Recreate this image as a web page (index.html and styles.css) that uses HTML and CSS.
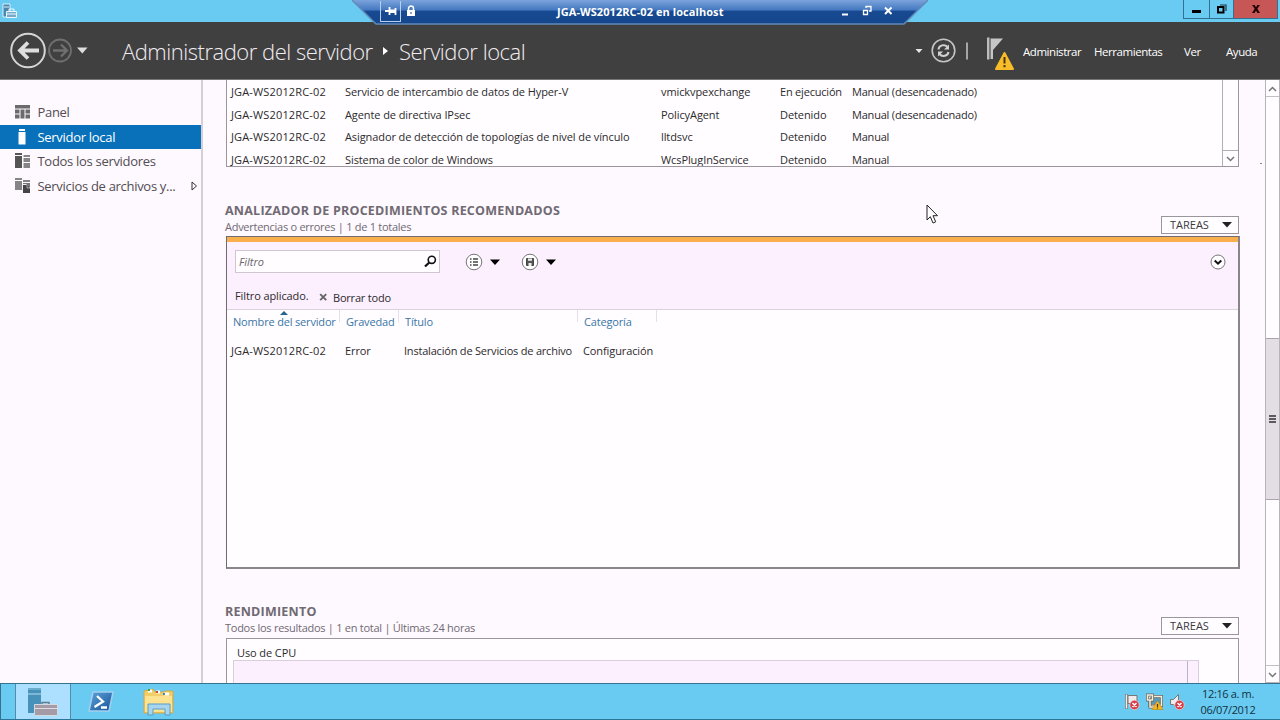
FILE: index.html
```
<!DOCTYPE html>
<html lang="es">
<head>
<meta charset="UTF-8">
<meta name="viewport" content="width=device-width, initial-scale=1.0">
<title>Administrador del servidor</title>
<link rel="stylesheet" href="styles.css">
</head>
<body>

<!-- Window title bar -->
<div class="titlebar">
    <svg class="app-icon" width="16" height="16" viewBox="0 0 16 16">
        <path d="M1 1h7v13H1z" fill="#4c86ad" stroke="#d8f1fb"/>
        <path d="M2 4h5" stroke="#d8f1fb"/>
        <path d="M4.500 8.500h10v6h-10z" fill="#78a9c6" stroke="#e9f8ff"/>
        <path d="M7 8V6h5v2M5 11h9" fill="none" stroke="#e9f8ff"/>
    </svg>
    <div class="win-buttons">
        <div class="win-btn min"><svg width="10" height="10"><path d="M0 6h9v3H0z"/></svg></div>
        <div class="win-btn max"><svg width="10" height="10"><path d="M3 1h6v6" fill="none" stroke="#234" stroke-width="1.200"/><path d="M1 3h5.500v5.500H1z" fill="none" stroke="#000" stroke-width="2"/></svg></div>
        <div class="win-btn close"><svg width="10" height="10"><path d="M1 1h2.600L5 3.200 6.400 1H9L6.300 4.700 9 9H6.400L5 6.400 3.600 9H1l2.700-4.300z" fill="#200"/></svg></div>
    </div>
</div>

<!-- Remote desktop connection bar -->
<div class="rdp">
    <svg class="rdp-bg" width="576" height="25" viewBox="0 0 576 25">
        <defs>
            <linearGradient id="rdpFill" x1="0" y1="0" x2="0" y2="1">
                <stop offset="0" stop-color="#7ba3dc"/>
                <stop offset=".42" stop-color="#4478c0"/>
                <stop offset=".46" stop-color="#174a91"/>
                <stop offset="1" stop-color="#15468c"/>
            </linearGradient>
        </defs>
        <path d="M0 0h576l-24 24H24z" fill="url(#rdpFill)"/>
        <path d="M0 0l24 24h528l24-24" fill="none" stroke="#6289b8" stroke-width="1.500"/>
    </svg>
    <div class="rdp-content">
        <div class="pin"><svg width="14" height="10" viewBox="0 0 14 10"><path d="M1 5h4M5.500 1v8M6 4.500h5M6 6h5M11.500 2v7" stroke="#fff" stroke-width="1.800"/></svg></div>
        <svg class="lock" width="10" height="12" viewBox="0 0 10 12"><path d="M2.500 6V3.500a2.500 2.500 0 0 1 5 0V6" fill="none" stroke="#fff" stroke-width="1.500"/><path d="M1 5h8v6H1z" fill="#fff"/><path d="M5 7v2" stroke="#174a91"/></svg>
        <span class="rdp-title">JGA-WS2012RC-02 en localhost</span>
        <svg class="rdp-controls" width="52" height="12" viewBox="0 0 52 12">
            <path d="M0 9.500h6" stroke="#fff" stroke-width="2"/>
            <path d="M21.500 5.500h4v4h-4zM24 3V1.500h5V6h-2" fill="none" stroke="#fff" stroke-width="1.300"/>
            <path d="M43 2.500l6.500 6.500M49.500 2.500L43 9" stroke="#fff" stroke-width="2"/>
        </svg>
    </div>
</div>

<!-- Navigation header -->
<div class="header">
    <svg class="nav-arrows" width="90" height="40" viewBox="0 0 90 40">
        <circle cx="20" cy="19.500" r="16.800" fill="none" stroke="#d5d5d5" stroke-width="2"/>
        <path d="M31 19.500H12M20 11.500l-8 8 8 8" fill="none" stroke="#dedede" stroke-width="3.800"/>
        <circle cx="52" cy="19.500" r="11" fill="none" stroke="#6f6f6f" stroke-width="1.800"/>
        <path d="M45 19.500h13M53 13.500l6 6-6 6" fill="none" stroke="#6f6f6f" stroke-width="2.400"/>
        <path d="M69 16.500h10.500l-5.200 6z" fill="#ddd"/>
    </svg>
    <div class="breadcrumb">
        <span class="crumb-root">Administrador del servidor</span>
        <svg width="6" height="10"><path d="M0 1l5 4-5 4z" fill="#fff"/></svg>
        <span class="crumb-page">Servidor local</span>
    </div>
    <svg class="header-icons" width="104" height="40" viewBox="0 0 104 40">
        <path d="M1.500 18h7l-3.500 4z" fill="#e5e5e5"/>
        <circle cx="29.500" cy="19.500" r="11.300" fill="none" stroke="#c5c5c5" stroke-width="1.600"/>
        <path d="M24.500 18.500a5 4.500 0 0 1 9-2.500M34.500 21a5 4.500 0 0 1-9 2" fill="none" stroke="#d0d0d0" stroke-width="2"/>
        <path d="M35 13.500v5h-5zM24 25.500v-5h5z" fill="#d0d0d0"/>
        <path d="M53 11.500v17" stroke="#c0c0c0" stroke-width="1.600"/>
        <path d="M73 6.500h2.500v22H73z" fill="#bcbcbc"/>
        <path d="M76.500 7.500H89L79 19v9h-2.500z" fill="#c6c6c6"/>
        <path d="M76 7v21" stroke="#777"/>
        <path d="M90.500 22L99 38H82z" fill="#f8bd28" stroke="#f8bd28" stroke-width="2" stroke-linejoin="round"/>
        <path d="M90.500 26v6.500M90.500 34v2.300" stroke="#4a3608" stroke-width="2"/>
    </svg>
    <nav class="menu">
        <span class="m-admin">Administrar</span>
        <span class="m-tools">Herramientas</span>
        <span class="m-view">Ver</span>
        <span class="m-help">Ayuda</span>
    </nav>
</div>

<div class="middle">
    <aside class="sidebar">
        <div class="side-item">
            <svg width="16" height="16" viewBox="0 0 16 16"><path d="M0 1h15v3.500H0zM0 5.500h4.500v4H0zM0 10.500h4.500v4H0zM5.500 5.500h4v9h-4zM10.500 5.500H15v4h-4.500zM10.500 10.500H15v4h-4.500z" fill="#6b6b6b"/></svg>
            <span class="s-panel">Panel</span>
        </div>
        <div class="side-item selected">
            <svg width="16" height="16" viewBox="0 0 16 16"><path d="M4 0h6v2H4zM3.500 3h7v12.500h-7z" fill="#fff"/></svg>
            <span class="s-local">Servidor local</span>
        </div>
        <div class="side-item">
            <svg width="16" height="16" viewBox="0 0 16 16"><path d="M0 0h7v2H0zM0 3h7v12H0z" fill="#555"/><path d="M8.500 2H15v2H8.500zM8.500 5H15v4H8.500zM8.500 10H15v5H8.500z" fill="#858585"/></svg>
            <span class="s-all">Todos los servidores</span>
        </div>
        <div class="side-item">
            <svg width="16" height="16" viewBox="0 0 16 16"><path d="M0 0h7v2H0zM0 3h7v9H0zM8 2h7v2H8z" fill="#858585"/><path d="M8 5h7v4H8z" fill="#777"/><path d="M8 7h4l3 3v5H8z" fill="#444"/><path d="M7.500 13V6.500h4" fill="none" stroke="#eee"/><path d="M12 7v3h3" fill="none" stroke="#ccc" stroke-width=".7"/></svg>
            <span class="s-files">Servicios de archivos y...</span>
            <svg class="expand" width="7" height="10"><path d="M1 1l4.500 4L1 9z" fill="none" stroke="#333"/></svg>
        </div>
    </aside>

    <main class="content">
        <!-- Services list -->
        <section class="services">
            <div class="service-rows">
                <div class="service"><span class="server">JGA-WS2012RC-02</span><span>Servicio de intercambio de datos de Hyper-V</span><span>vmickvpexchange</span><span class="tight">En ejecución</span><span class="tight">Manual (desencadenado)</span></div>
                <div class="service"><span class="server">JGA-WS2012RC-02</span><span>Agente de directiva IPsec</span><span>PolicyAgent</span><span>Detenido</span><span class="tight">Manual (desencadenado)</span></div>
                <div class="service"><span class="server">JGA-WS2012RC-02</span><span>Asignador de detección de topologías de nivel de vínculo</span><span>lltdsvc</span><span>Detenido</span><span class="tight">Manual</span></div>
                <div class="service"><span class="server">JGA-WS2012RC-02</span><span>Sistema de color de Windows</span><span>WcsPlugInService</span><span>Detenido</span><span class="tight">Manual</span></div>
            </div>
            <div class="list-scroll">
                <div class="list-down"><svg width="9" height="6"><path d="M1 1l3.500 3.500L8 1" fill="none" stroke="#777" stroke-width="1.500"/></svg></div>
            </div>
        </section>

        <!-- Best practices analyzer -->
        <div class="section-head bpa-head">
            <div>
                <h2 class="h-bpa">ANALIZADOR DE PROCEDIMIENTOS RECOMENDADOS</h2>
                <p class="p-bpa">Advertencias o errores | 1 de 1 totales</p>
            </div>
            <div class="tasks"><span>TAREAS</span><svg width="10" height="6"><path d="M0 0h10L5 5.500z" fill="#222"/></svg></div>
        </div>
        <section class="bpa">
            <div class="stripe"></div>
            <div class="tools">
                <div class="filter-row">
                    <div class="filter">
                        <span>Filtro</span>
                        <svg width="13" height="13" viewBox="0 0 13 13"><circle cx="7.800" cy="4.800" r="3.600" fill="none" stroke="#111" stroke-width="1.600"/><path d="M5.300 7.500L1 11.500" stroke="#111" stroke-width="2.300"/></svg>
                    </div>
                    <svg class="tool list" width="36" height="18" viewBox="0 0 36 18"><circle cx="9" cy="9" r="7.800" fill="#fff" stroke="#777"/><path d="M5 6h1.500M5 9h1.500M5 12h1.500M8 6h5M8 9h5M8 12h5" stroke="#444" stroke-width="1.300"/><path d="M25 6.500h10L30 12z"/></svg>
                    <svg class="tool save" width="36" height="18" viewBox="0 0 36 18"><circle cx="9" cy="9" r="7.800" fill="#fff" stroke="#777"/><path d="M5.500 5.500h7v7h-7z" fill="#555" stroke="#444"/><path d="M7 5.500h4v2.300H7zM7.500 10h3v3h-3z" fill="#eee"/><path d="M25 6.500h10L30 12z"/></svg>
                    <svg class="collapse" width="16" height="16" viewBox="0 0 16 16"><circle cx="8" cy="8" r="7" fill="#fff" stroke="#777"/><path d="M4.700 6.500L8 9.700l3.300-3.200" fill="none" stroke="#111" stroke-width="2"/></svg>
                </div>
                <div class="applied">
                    <span class="a-text">Filtro aplicado.</span>
                    <svg width="9" height="9"><path d="M1.200 1.200l6 6M7.200 1.200l-6 6" stroke="#666" stroke-width="1.900"/></svg>
                    <span class="a-clear">Borrar todo</span>
                </div>
            </div>
            <div class="cols">
                <span class="sorted">Nombre del servidor</span><span>Gravedad</span><span>Título</span><span>Categoría</span>
            </div>
            <div class="result"><span class="server">JGA-WS2012RC-02</span><span>Error</span><span class="tight">Instalación de Servicios de archivo</span><span>Configuración</span></div>
        </section>

        <!-- Performance -->
        <div class="section-head perf-head">
            <div>
                <h2 class="h-perf">RENDIMIENTO</h2>
                <p class="p-perf">Todos los resultados | 1 en total | Últimas 24 horas</p>
            </div>
            <div class="tasks"><span>TAREAS</span><svg width="10" height="6"><path d="M0 0h10L5 5.500z" fill="#222"/></svg></div>
        </div>
        <section class="perf">
            <p class="p-cpu">Uso de CPU</p>
            <div class="chart"><div class="chart-edge"></div></div>
        </section>
    </main>

    <div class="scroll-mark"></div>
    <div class="page-scroll">
        <div class="scroll-btn"><svg width="9" height="6"><path d="M1 5l3.500-3.500L8 5" fill="none" stroke="#777" stroke-width="1.500"/></svg></div>
        <div class="thumb"><i></i><i></i><i></i></div>
        <div class="scroll-btn down"><svg width="9" height="6"><path d="M1 1l3.500 3.500L8 1" fill="none" stroke="#777" stroke-width="1.500"/></svg></div>
    </div>
</div>

<!-- Taskbar -->
<div class="taskbar">
    <div class="task active">
        <svg width="32" height="30" viewBox="0 0 32 30">
            <path d="M1 1h13v25H1z" fill="#4792ba"/><path d="M1 7h13" stroke="#b8def2"/><path d="M1 1h13v2H1z" fill="#6badcd"/>
            <path d="M7.500 17.500h23v11h-23z" fill="#a49ba6" stroke="#d2dbe4"/><path d="M8 21.500h22" stroke="#e1dce2"/><path d="M15 17v-1.500h7V17" fill="none" stroke="#687b88" stroke-width="1.500"/>
        </svg>
    </div>
    <div class="task ps">
        <svg width="28" height="24" viewBox="0 0 28 24">
            <defs><linearGradient id="psFill" x1="0" y1="0" x2="1" y2="1"><stop offset="0" stop-color="#5ea2da"/><stop offset="1" stop-color="#165399"/></linearGradient></defs>
            <path d="M6 2h20l-4 19H2z" fill="url(#psFill)" stroke="#a4d0ee" stroke-width="1.500" stroke-linejoin="round"/>
            <path d="M10 6l6 5.500L7.500 17M14 17.500h6" fill="none" stroke="#fff" stroke-width="2.300"/>
        </svg>
    </div>
    <div class="task files">
        <svg width="32" height="28" viewBox="0 0 32 28">
            <path d="M1 3l9-2 2 3h9l2-1h7v22H1z" fill="#f2ce69" stroke="#d5a845"/>
            <path d="M5 3h4M13 4h4M21 6h5" stroke="#fff" stroke-width="3"/>
            <path d="M5 2h2" stroke="#3aa54b" stroke-width="2"/><path d="M13 4h2" stroke="#d14731" stroke-width="2"/><path d="M20 6h2" stroke="#348bd0" stroke-width="2"/>
            <path d="M2 8h27v16H2z" fill="#fbe391"/>
            <path d="M5 27V16h22v11h-5v-6H10v6z" fill="#a7d5ee" stroke="#579dca"/>
        </svg>
    </div>
    <div class="tray">
        <svg width="64" height="18" viewBox="0 0 64 18">
            <path d="M2.500 1v15" stroke="#777" stroke-width="3"/><path d="M2.500 1.500v14" stroke="#eee" stroke-width="1.500"/><path d="M4 2.500h9v8H4z" fill="#f0eaea" stroke="#777"/>
            <path d="M25.500 3.500h12v9h-12z" fill="#5c98b6" stroke="#666" stroke-width="3"/><path d="M25.500 3.500h12v9h-12z" fill="none" stroke="#f3eed8" stroke-width="1.500"/>
            <path d="M23.500 2v5h5V2zM26 7v7h5" fill="none" stroke="#666" stroke-width="3"/><path d="M23.500 2v5h5V2zM26 7v7h5" fill="none" stroke="#f3eed8" stroke-width="1.500"/>
            <path d="M33.500 8l5.500 8.500H28z" fill="#f5b821" stroke="#c98c13" stroke-width=".7"/><path d="M33.500 11v3M33.500 14.500v1" stroke="#432" stroke-width="1.200"/>
            <path d="M46.500 6.500h3l5-5v15l-5-5h-3z" fill="#eee" stroke="#777"/>
            <g fill="#d93c43" stroke="#eed0d6" stroke-width=".7"><circle cx="10.500" cy="12" r="4.700"/><circle cx="55.500" cy="12" r="4.700"/></g>
            <path d="M8.500 10l4 4M12.500 10l-4 4M53.500 10l4 4M57.500 10l-4 4" stroke="#fff" stroke-width="1.500"/>
        </svg>
        <div class="clock"><span class="time">12:16 a. m.</span><span class="date">06/07/2012</span></div>
    </div>
</div>

<svg class="cursor" width="13" height="20" viewBox="0 0 13 20"><path d="M1 1v15l3.300-3.300L7 19l2.700-1.200L7 11.700h4.500z" fill="#fff" stroke="#222"/></svg>

</body>
</html>
```

FILE: styles.css
```
* {
    box-sizing: border-box;
}

body {
    margin: 0;
    width: 1280px;
    height: 720px;
    overflow: hidden;
    display: flex;
    flex-direction: column;
    background-color: #fef8ff;
    font-family: "Open Sans", "Noto Sans", sans-serif;
    font-size: 11px;
    color: #2c2a2c;
    position: relative;
}

span, p, h2 {
    white-space: nowrap;
}

svg {
    flex: none;
    display: block;
}

h2, p {
    margin: 0;
}

/* Title bar */
.titlebar {
    height: 22px;
    flex: none;
    display: flex;
    justify-content: space-between;
    background-color: #69cbf1;
    padding: 0 2px 0 2px;
}

.app-icon {
    margin-top: 3px;
}

.win-buttons {
    display: flex;
    height: 19px;
    border: 1px solid #32718e;
    border-top: none;
}

.win-btn {
    display: flex;
    justify-content: center;
    align-items: center;
    border-right: 1px solid #32718e;
}

.min {
    width: 26px;
}

.max {
    width: 24px;
}

.close {
    width: 43px;
    border-right: none;
    background-color: #c75656;
}

/* Connection bar lies over the title bar and the header */
.rdp {
    position: absolute;
    top: 0;
    left: 352px;
    width: 576px;
    height: 25px;
}

.rdp-bg {
    position: absolute;
}

.rdp-content {
    position: relative;
    display: flex;
    align-items: center;
    height: 22px;
    padding-left: 28px;
}

.pin {
    width: 21px;
    height: 21px;
    border: 1px solid #b8d0f0;
    border-top: none;
    display: flex;
    align-items: center;
    justify-content: center;
}

.lock {
    margin-left: 5px;
}

.rdp-title {
    width: 167px;
    margin-left: 141px;
    padding-top: 1px;
    color: #fff;
    font-size: 11px;
    font-weight: 700;
    letter-spacing: 0.07px;
}

.rdp-controls {
    margin-left: 118px;
}

/* Header */
.header {
    height: 58px;
    flex: none;
    display: flex;
    align-items: center;
    background-color: #404040;
    border-bottom: 1px solid #777;
    padding: 0 22px 0 8px;
}

.breadcrumb {
    display: flex;
    align-items: center;
    margin-left: 24px;
    color: #f2edf2;
    font-size: 22px;
    font-weight: 300;
    letter-spacing: -0.48px;
}

.breadcrumb svg {
    margin: 0 10px 0 11px;
}

.crumb-root {
    width: 250px;
}

.crumb-page {
    width: 128px;
}

.header-icons {
    margin-left: auto;
}

.menu {
    display: flex;
    margin-left: 5px;
    color: #fff;
    font-size: 11.5px;
    letter-spacing: -0.45px;
    padding-top: 1px;
}

.m-admin {
    width: 71px;
}

.m-tools {
    width: 90px;
}

.m-view {
    width: 42px;
}

.m-help {
    width: 32px;
}

.middle {
    flex: 1;
    min-height: 0;
    display: flex;
}

/* Sidebar */
.sidebar {
    width: 203px;
    flex: none;
    padding-top: 20px;
    border-right: 2px solid #d5ced6;
}

.side-item {
    height: 24.5px;
    display: flex;
    align-items: center;
    padding: 0 3px 0 15px;
    font-size: 13px;
    letter-spacing: -0.3px;
    color: #514d52;
}

.side-item span {
    margin-left: 6.5px;
}

.side-item.selected {
    background-color: #0871ba;
    color: #fff;
}

.expand {
    margin-left: auto;
}

/* Content */
.content {
    flex: 1;
    min-width: 0;
    padding-left: 22px;
    overflow: hidden;
}

.services {
    width: 1013px;
    height: 87px;
    margin-left: 1px;
    display: flex;
    border: 1px solid #9b959c;
    border-top: none;
    background-color: #fffdff;
    overflow: hidden;
}

.service-rows {
    flex: 1;
    padding: 1px 0 0 4px;
}

.service {
    display: grid;
    grid-template-columns: 114px 316px 119px 72px 1fr;
    height: 22.5px;
    line-height: 22.5px;
    letter-spacing: -0.09px;
}

.service .server, .result .server {
    letter-spacing: 0.15px;
}

.service .tight, .result .tight {
    letter-spacing: -0.2px;
}

.list-scroll {
    width: 16px;
    border-left: 1px solid #b3adb4;
    display: flex;
    align-items: flex-end;
}

.list-down {
    width: 15px;
    height: 16px;
    border-top: 1px solid #b3adb4;
    display: flex;
    align-items: center;
    justify-content: center;
}

.section-head {
    width: 1014px;
    display: flex;
    justify-content: space-between;
    align-items: flex-end;
    color: #706a72;
}

.section-head h2 {
    font-size: 12.5px;
    line-height: 17px;
    font-weight: 700;
    letter-spacing: 0.23px;
}

.section-head p {
    line-height: 15px;
    letter-spacing: -0.27px;
}

.bpa-head {
    margin-top: 35px;
    height: 32px;
}

.perf-head {
    margin-top: 34px;
    height: 32px;
}

.tasks {
    width: 78px;
    height: 18px;
    display: flex;
    align-items: center;
    justify-content: space-between;
    padding: 0 6px 0 8px;
    border: 1px solid #9b959c;
    background-color: #fffdff;
    color: #3c383d;
    line-height: 14px;
}

.bpa {
    width: 1014px;
    height: 333px;
    margin: 2px 0 0 1px;
    border: 1px solid #706b71;
    border-right-width: 2px;
    border-bottom-width: 2px;
    border-right-color: #8a858b;
    border-bottom-color: #8a858b;
    background-color: #fffdff;
}

.stripe {
    height: 5px;
    background-color: #f9af4b;
}

.tools {
    height: 68px;
    padding: 8px 12px 0 8px;
    background-color: #fcf0fe;
    border-bottom: 1px solid #dbd3dc;
}

.filter-row {
    display: flex;
    align-items: center;
}

.filter {
    width: 205px;
    height: 23px;
    display: flex;
    align-items: center;
    justify-content: space-between;
    padding: 0 2px 0 3px;
    border: 1px solid #cfc7d0;
    background-color: #fffdff;
    color: #6b666c;
    font-style: italic;
}

.list {
    margin-left: 25px;
}

.save {
    margin-left: 20px;
}

.collapse {
    margin-left: auto;
}

.applied {
    display: flex;
    align-items: center;
    margin-top: 14px;
    line-height: 15px;
    letter-spacing: -0.2px;
}

.applied svg {
    margin: 2px 5px 0 11px;
}

.a-clear {
    padding-top: 3px;
}

.a-text {
    width: 73px;
    padding-bottom: 1px;
    letter-spacing: -0.1px;
}

.cols {
    display: flex;
    height: 25px;
    color: #3b75a6;
    letter-spacing: -0.17px;
}

.cols span {
    height: 12px;
    padding-left: 6px;
    border-right: 1px solid #e6dfe7;
    line-height: 23px;
}

.cols span:nth-child(1) {
    width: 113px;
}

.cols span:nth-child(2) {
    width: 59px;
}

.cols span:nth-child(3) {
    width: 179px;
}

.cols span:nth-child(4) {
    width: 79px;
}

.sorted {
    position: relative;
}

.sorted::before {
    content: '';
    position: absolute;
    left: 53px;
    top: 1px;
    border: 4px solid transparent;
    border-top: none;
    border-bottom-color: #28638d;
}

.result {
    display: grid;
    grid-template-columns: 114px 59px 179px 1fr;
    padding: 5px 0 0 4px;
    line-height: 22px;
    letter-spacing: -0.1px;
}

.perf {
    width: 1013px;
    height: 60px;
    margin: 3px 0 0 1px;
    padding: 7px 39px 0 6px;
    border: 1px solid #9b959c;
    background-color: #fffdff;
}

.perf p {
    padding-left: 4px;
    line-height: 14px;
    letter-spacing: -0.1px;
}

.chart {
    height: 40px;
    border: 1px solid #d8cfda;
    background-color: #fcf0fe;
    display: flex;
    justify-content: flex-end;
}

.chart-edge {
    width: 11px;
    border-left: 1px solid #b9b4c5;
}

/* Page scrollbar */
.scroll-mark {
    width: 2px;
    height: 1px;
    margin: 83px 3px 0 0;
    background-color: #8d8790;
}

.page-scroll {
    width: 15px;
    display: flex;
    flex-direction: column;
    border: 1px solid #b9b2ba;
    border-top: none;
    background-color: #fffdff;
}

.scroll-btn {
    height: 17px;
    flex: none;
    padding-top: 1px;
    border-bottom: 1px solid #c5bec6;
    display: flex;
    align-items: center;
    justify-content: center;
}

.down {
    margin-top: auto;
    border-bottom: none;
    border-top: 1px solid #c5bec6;
}

.thumb {
    height: 162px;
    margin-top: 241px;
    display: flex;
    flex-direction: column;
    align-items: center;
    justify-content: center;
    gap: 1px;
    border: solid #aaa4ab;
    border-width: 1px 0;
    background-color: #e3dee4;
}

.thumb i {
    width: 7px;
    height: 2px;
    background-color: #5e595f;
}

/* Taskbar */
.taskbar {
    height: 37px;
    flex: none;
    display: flex;
    border: 1px solid #35728e;
    border-right: none;
    border-bottom-color: #2b7698;
    background-color: #69cbf1;
    padding-left: 14px;
}

.task {
    width: 58px;
    display: flex;
    align-items: center;
    justify-content: center;
}

.ps {
    margin-left: 1px;
}

.active {
    width: 56px;
    border: solid #4f8daa;
    border-width: 0 1px;
    background-color: #ade0fe;
}

.tray {
    margin-left: auto;
    display: flex;
    align-items: center;
    padding-right: 24px;
}

.clock {
    display: flex;
    flex-direction: column;
    align-items: center;
    width: 56px;
    margin-left: 12px;
    line-height: 16px;
    letter-spacing: -0.35px;
    color: #14313e;
}

.cursor {
    position: absolute;
    left: 926px;
    top: 204px;
}
```
